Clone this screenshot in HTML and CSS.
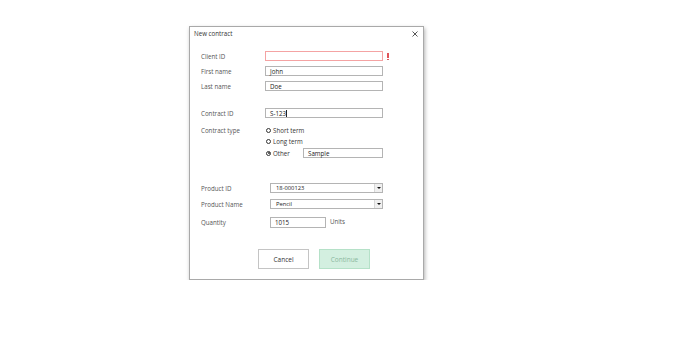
FILE: index.html
```html
<!DOCTYPE html>
<html lang="en">
<head>
    <meta charset="UTF-8">
    <title>New contract</title>
    <link rel="stylesheet" href="styles.css">
</head>
<body>
    <div class="dialog">
        <div class="titulo">
            <span>New contract</span>
            <svg class="cerrar" width="6" height="6" viewBox="0 0 6 6">
                <path d="M0.5 0.5 L5.5 5.5 M5.5 0.5 L0.5 5.5" stroke="#444" stroke-width="0.9" fill="none"/>
            </svg>
        </div>

        <div class="formulario">
            <div class="fila fila-cliente">
                <label>Client ID</label>
                <div class="campo campo-error"></div>
                <span class="alerta"></span>
            </div>
            <div class="fila fila-junta">
                <label>First name</label>
                <div class="campo">John</div>
            </div>
            <div class="fila fila-junta">
                <label>Last name</label>
                <div class="campo">Doe</div>
            </div>

            <div class="fila fila-contrato">
                <label>Contract ID</label>
                <div class="campo">S-123<span class="cursor"></span></div>
            </div>
            <div class="fila fila-tipo">
                <label>Contract type</label>
                <div class="opciones">
                    <div class="opcion"><span class="radio"></span>Short term</div>
                    <div class="opcion"><span class="radio"></span>Long term</div>
                    <div class="opcion opcion-otra">
                        <span class="radio radio-activo"></span><span class="opcion-texto">Other</span>
                        <div class="campo campo-otro">Sample</div>
                    </div>
                </div>
            </div>

            <div class="fila fila-producto">
                <label>Product ID</label>
                <div class="combo">18-000123<span class="flecha"></span></div>
            </div>
            <div class="fila fila-nombre">
                <label>Product Name</label>
                <div class="combo">Pencil<span class="flecha"></span></div>
            </div>
            <div class="fila fila-cantidad">
                <label>Quantity</label>
                <div class="campo campo-cantidad">1015</div>
                <span class="unidad">Units</span>
            </div>
        </div>

        <div class="botones">
            <button class="boton">Cancel</button>
            <button class="boton boton-seguir">Continue</button>
        </div>
    </div>
</body>
</html>
```

FILE: styles.css
```css
body {
    margin: 0;
    background-color: #ffffff;
    font-family: 'Open Sans', 'Noto Sans', sans-serif;
    font-size: 6.2px;
    color: #555;
}
.dialog {
    margin: 26px 0 0 189px;
    width: 233px;
    height: 252px;
    border: 1px solid #a9a9a9;
    background-color: #fff;
    box-shadow: 1px 2px 4px rgba(0, 0, 0, 0.3);
    display: flex;
    flex-direction: column;
}
.titulo {
    display: flex;
    justify-content: space-between;
    align-items: center;
    height: 13px;
    padding: 0 5px 0 4px;
    color: #333;
}
.formulario {
    display: flex;
    flex-direction: column;
    padding-left: 11px;
}
.fila {
    display: flex;
    align-items: center;
    height: 10px;
}
.fila label {
    width: 64px;
    flex-shrink: 0;
}
.fila-cliente { margin-top: 11px; }
.fila-junta { margin-top: 5px; }
.fila-contrato { margin-top: 17px; }
.fila-tipo {
    margin-top: 7px;
    height: auto;
    align-items: flex-start;
}
.fila-tipo label { margin-top: 1px; }
.fila-producto { margin-top: 25px; }
.fila-nombre { margin-top: 6px; }
.fila-cantidad { margin-top: 8px; height: 11px; }
.fila-producto label,
.fila-nombre label,
.fila-cantidad label {
    width: 69px;
}
.campo {
    box-sizing: border-box;
    width: 118px;
    height: 10px;
    border: 1px solid #b4b4b4;
    padding-left: 4px;
    display: flex;
    align-items: center;
    color: #222;
}
.campo-error {
    border-color: #f4a3a3;
}
.alerta {
    margin-left: 4px;
    width: 1.5px;
    height: 5px;
    background-color: #e0555a;
    margin-top: -2px;
    position: relative;
}
.alerta::after {
    content: '';
    position: absolute;
    left: 0;
    top: 6px;
    width: 1.5px;
    height: 1.5px;
    background-color: #e0555a;
}
.cursor {
    width: 1px;
    height: 7px;
    background-color: #222;
}
.opciones {
    display: flex;
    flex-direction: column;
    gap: 1px;
    margin-left: 1px;
}
.opcion {
    display: flex;
    align-items: center;
    height: 10px;
    color: #333;
}
.opcion-otra { margin-top: 1px; }
.opcion-texto { width: 30px; }
.radio {
    box-sizing: border-box;
    width: 5px;
    height: 5px;
    border: 1px solid #333;
    border-radius: 50%;
    margin-right: 2px;
    display: flex;
    justify-content: center;
    align-items: center;
}
.radio-activo::after {
    content: '';
    width: 2px;
    height: 2px;
    border-radius: 50%;
    background-color: #333;
}
.campo-otro {
    width: 80px;
}
.combo {
    box-sizing: border-box;
    width: 113px;
    height: 10px;
    border: 1px solid #b4b4b4;
    padding-left: 5px;
    display: flex;
    align-items: center;
    justify-content: space-between;
    color: #222;
    font-size: 5.8px;
}
.flecha {
    box-sizing: border-box;
    width: 8px;
    height: 8px;
    background-color: #f0f0f0;
    border-left: 1px solid #d8d8d8;
    display: flex;
    justify-content: center;
    align-items: center;
}
.flecha::after {
    content: '';
    border-left: 2px solid transparent;
    border-right: 2px solid transparent;
    border-top: 2px solid #111;
}
.campo-cantidad {
    width: 56px;
    height: 11px;
}
.unidad {
    margin-left: 4px;
    margin-top: -2px;
}
.botones {
    display: flex;
    gap: 10px;
    margin-top: 21px;
    padding-left: 68px;
}
.boton {
    box-sizing: border-box;
    width: 51px;
    height: 20px;
    font-family: inherit;
    font-size: 6.5px;
    color: #333;
    background-color: #fff;
    border: 1px solid #c4c4c4;
    padding: 0;
}
.boton-seguir {
    background-color: #d3efe0;
    border-color: #b5e1c8;
    color: #8bb89f;
}
```
